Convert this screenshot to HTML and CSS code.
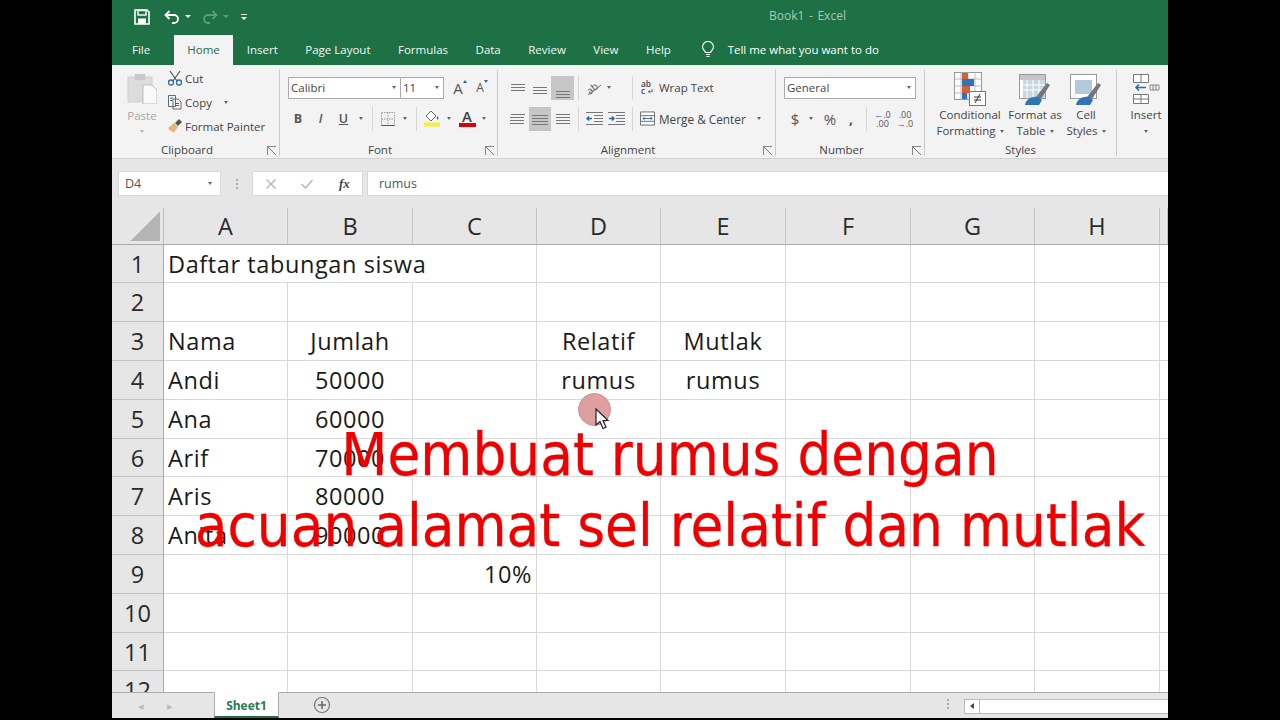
FILE: index.html
```html
<!DOCTYPE html>
<html lang="id">
<head>
<meta charset="utf-8">
<title>Book1 - Excel</title>
<link rel="stylesheet" href="styles.css">
</head>
<body>
<div class="app">
  <header class="titlebar">
    <svg class="qa save" width="16" height="16" viewBox="0 0 16 16"><path d="M1 1h12l2 2v12H1z" fill="none" stroke="#fff" stroke-width="1.6"/><rect x="4" y="1.5" width="8" height="4.5" fill="none" stroke="#fff" stroke-width="1.4"/><rect x="4" y="9.5" width="8" height="5.5" fill="#fff"/></svg>
    <svg class="qa undo" width="16" height="14" viewBox="0 0 16 14"><path d="M5.5 1 1.5 5l4 4M2 5h8a4 4 0 0 1 4 4v0a4 4 0 0 1-4 4H8" fill="none" stroke="#fff" stroke-width="1.8"/></svg>
    <span class="wcaret qa-c1"></span>
    <svg class="qa redo" width="16" height="14" viewBox="0 0 16 14"><path d="M10.5 1l4 4-4 4M14 5H6a4 4 0 0 0-4 4v0a4 4 0 0 0 4 4h2" fill="none" stroke="#5c9c78" stroke-width="1.8"/></svg>
    <span class="wcaret dim qa-c2"></span>
    <span class="custom"><i></i><b></b></span>
    <span class="doc">Book1 - Excel</span>
  </header>
  <nav class="tabs">
    <span class="tab file">File</span>
    <span class="tab home">Home</span>
    <span class="tab">Insert</span>
    <span class="tab">Page Layout</span>
    <span class="tab">Formulas</span>
    <span class="tab">Data</span>
    <span class="tab">Review</span>
    <span class="tab">View</span>
    <span class="tab">Help</span>
    <svg class="bulb" width="14" height="17" viewBox="0 0 14 17"><path d="M4.5 11.5C4 9.5 1.5 8.500 1.5 6a5.500 5.500 0 0 1 11 0c0 2.500-2.500 3.500-3 5.500zM5 13.500h4M5.500 15.500h3" fill="none" stroke="#fff" stroke-width="1.200"/></svg>
    <span class="tell">Tell me what you want to do</span>
  </nav>

  <section class="ribbon">
    <div class="group g-clip">
      <div class="body clip-body">
        <div class="paste">
          <svg width="30" height="32" viewBox="0 0 30 32"><rect x="1" y="5" width="24" height="25" fill="#dcdcdc" stroke="#cfcfcf"/><rect x="8" y="2" width="10" height="6" fill="#c8c8c8"/><path d="M16 13h9l5 5v14H16z" fill="#fafafa" stroke="#bdbdbd"/></svg>
          <span class="paste-t">Paste</span>
          <span class="caret faint"></span>
        </div>
        <div class="clip-list">
          <div class="cl"><svg width="16" height="16" viewBox="0 0 16 16"><path d="M3 1l7 10M13 1 6 11" stroke="#555" stroke-width="1.200" fill="none"/><circle cx="4" cy="12.500" r="2.500" fill="none" stroke="#2b6aa8" stroke-width="1.300"/><circle cx="12" cy="12.500" r="2.500" fill="none" stroke="#2b6aa8" stroke-width="1.300"/></svg><span>Cut</span></div>
          <div class="cl"><svg width="16" height="16" viewBox="0 0 16 16"><path d="M1.500 1.500h7v11h-7zM6 5h5l3 3v7H6z" fill="#f7f7f7" stroke="#666"/><path d="M3 4h3M3 6.500h2M8 9.500h4M8 11.500h4" stroke="#2b6aa8"/></svg><span>Copy</span><i class="caret cl-c"></i></div>
          <div class="cl"><svg width="16" height="16" viewBox="0 0 16 16"><path d="M1 10 7 5l4 4-4 5.500C5 14 2 12 1 10z" fill="#e3b777"/><path d="m8 5 4-4 3 3-4 4z" fill="#555"/></svg><span>Format Painter</span></div>
        </div>
      </div>
      <div class="label lbl-l">Clipboard<i class="launch"></i></div>
    </div>

    <div class="group g-font">
      <div class="body">
        <div class="row">
          <span class="combo c-name">Calibri<i class="caret"></i></span>
          <span class="combo c-size">11<i class="caret"></i></span>
          <span class="slot w28"><span class="bigA">A<i class="up"></i></span></span>
          <span class="slot w16"><span class="bigA sm">A<i class="dn"></i></span></span>
        </div>
        <div class="row pad7">
          <span class="slot w22 fmt b">B</span>
          <span class="slot w23 fmt it">I</span>
          <span class="slot w23 fmt u">U</span>
          <span class="slot w12"><i class="caret"></i></span>
          <span class="slot w10"><i class="sep"></i></span>
          <span class="slot w22"><svg width="14" height="14" viewBox="0 0 14 14"><path d="M.5.500h13v13H.500zM7 .5v13M.5 7h13" fill="none" stroke="#999" stroke-dasharray="1.500 1"/><path d="M.5 13.500h13" stroke="#555"/></svg></span>
          <span class="slot w12"><i class="caret"></i></span>
          <span class="slot w10"><i class="sep"></i></span>
          <span class="slot w22"><svg width="17" height="17" viewBox="0 0 17 17"><path d="M7 1 2 6l5 5 5-5z" fill="#fff" stroke="#666"/><path d="M13 6c1.500 1.500 2 3 .8 3.500-1 .2-1.200-1-.8-3.500z" fill="#2b6aa8"/><rect x="0" y="12.500" width="16" height="4" fill="#f7ef3a"/></svg></span>
          <span class="slot w12"><i class="caret"></i></span>
          <span class="slot w24 colorA">A<i></i></span>
          <span class="slot w10"><i class="caret"></i></span>
        </div>
      </div>
      <div class="label lbl-l">Font<i class="launch"></i></div>
    </div>

    <div class="group g-align">
      <div class="body">
        <div class="row pad9">
          <span class="slot w22 al"><i class="ln top"></i></span>
          <span class="slot w22 al"><i class="ln"></i></span>
          <span class="slot w23 al sel"><i class="ln bot"></i></span>
          <span class="slot w8"><i class="sep"></i></span>
          <span class="slot w24"><svg width="18" height="17" viewBox="0 0 18 17"><text class="orient" x="1" y="13" transform="rotate(-40 7 9)">ab</text><path d="M3 16 16 6" stroke="#666"/></svg></span>
          <span class="slot w6"><i class="caret"></i></span>
          <span class="slot w8 ml16"><i class="sep"></i></span>
          <span class="slot w14 ml5"><svg width="15" height="17" viewBox="0 0 15 17"><text class="wrap-ic" x="0" y="8">ab</text><text class="wrap-ic" x="0" y="16">c</text><path d="M12 10v3H8m1.500-1.500L8 13l1.500 1.500" fill="none" stroke="#2b6aa8"/></svg></span>
          <span class="rt">Wrap Text</span>
        </div>
        <div class="row pad9">
          <span class="slot w22 al"><i class="ln left"></i></span>
          <span class="slot w22 al sel"><i class="ln mid"></i></span>
          <span class="slot w23 al"><i class="ln right"></i></span>
          <span class="slot w8"><i class="sep"></i></span>
          <span class="slot w24"><svg width="17" height="13" viewBox="0 0 17 13"><path d="M8 3.500h9M8 6.500h9M8 9.500h9M0 12.500h17M0 .5h17" stroke="#777"/><path d="M6 6.500H1m2-2-2 2 2 2" fill="none" stroke="#2b6aa8" stroke-width="1.500"/></svg></span>
          <span class="slot w20"><svg width="17" height="13" viewBox="0 0 17 13"><path d="M8 3.500h9M8 6.500h9M8 9.500h9M0 12.500h17M0 .5h17" stroke="#777"/><path d="M1 6.500h5m-2-2 2 2-2 2" fill="none" stroke="#2b6aa8" stroke-width="1.500"/></svg></span>
          <span class="slot w8 ml2"><i class="sep"></i></span>
          <span class="slot w15 ml4"><svg width="16" height="15" viewBox="0 0 16 15"><path d="M.5.500h15v14H.500zM.5 4.500h15M.5 10.500h15" fill="#fff" stroke="#666"/><path d="M3 7.500h10M5 5.800 3 7.500l2 1.700M11 5.800l2 1.700-2 1.700" fill="none" stroke="#2b6aa8"/></svg></span>
          <span class="rt merge">Merge &amp; Center</span>
          <span class="slot w14 ml6"><i class="caret"></i></span>
        </div>
      </div>
      <div class="label lbl-l">Alignment<i class="launch"></i></div>
    </div>

    <div class="group g-num">
      <div class="body">
        <div class="row"><span class="combo c-gen">General<i class="caret"></i></span></div>
        <div class="row pad8">
          <span class="slot w22 numt">$</span>
          <span class="slot w10"><i class="caret"></i></span>
          <span class="slot w28 numt">%</span>
          <span class="slot w14 numt bold">,</span>
          <span class="slot w16"><i class="sep"></i></span>
          <span class="slot w17 dec"><em><b>←</b>.0</em><em>.00</em></span>
          <span class="slot w16 ml6 dec"><em>.00</em><em><b>→</b>.0</em></span>
        </div>
      </div>
      <div class="label lbl-l">Number<i class="launch"></i></div>
    </div>

    <div class="group g-styles">
      <div class="body style-body">
        <div class="big w66">
          <svg width="32" height="34" viewBox="0 0 32 34"><rect x=".5" y=".5" width="27" height="27" fill="#fff" stroke="#999"/><path d="M7 .5v27M14 .5v27M21 .5v27M.5 7h27M.5 14h27M.5 21h27" stroke="#bbb"/><rect x="8" y="1" width="6" height="6" fill="#d2603a"/><rect x="8" y="7" width="12" height="7" fill="#2f75b5"/><rect x="8" y="14" width="8" height="7" fill="#d2603a"/><rect x="8" y="21" width="5" height="6" fill="#2f75b5"/><rect x="15.500" y="19.500" width="16" height="14" fill="#fff" stroke="#777"/><path d="M20 28h7M20 25h7M26 22l-5 9" stroke="#333" fill="none"/></svg>
          <span>Conditional</span><span>Formatting<i class="caret tiny"></i></span>
        </div>
        <div class="big w64">
          <svg width="32" height="34" viewBox="0 0 32 34"><rect x=".5" y="2.500" width="26" height="24" fill="#fff" stroke="#999"/><rect x="1" y="3" width="25" height="5" fill="#c6c6c6"/><rect x="4" y="8" width="22" height="18" fill="#c7d7e0"/><path d="M8 8v18M14 8v18M20 8v18M1 13h25M1 18h25" stroke="#fff"/><path d="m17 25 11-14 3 2-9 14z" fill="#777"/><path d="M6 33c1-6 7-9 13-8l4 3-3 5z" fill="#2f75b5"/></svg>
          <span>Format as</span><span>Table<i class="caret tiny"></i></span>
        </div>
        <div class="big w38">
          <svg width="32" height="34" viewBox="0 0 32 34"><rect x=".5" y="2.500" width="26" height="24" fill="#fff" stroke="#999"/><rect x="5" y="8" width="17" height="14" fill="#b3cadb"/><path d="m17 25 11-14 3 2-9 14z" fill="#777"/><path d="M6 33c1-6 7-9 13-8l4 3-3 5z" fill="#2f75b5"/></svg>
          <span>Cell</span><span>Styles<i class="caret tiny"></i></span>
        </div>
      </div>
      <div class="label">Styles</div>
    </div>

    <div class="group g-cells">
      <div class="big w58">
        <svg width="28" height="32" viewBox="0 0 28 32"><path d="M1.500 1.500h15v8h-15zM9 1.500v8M1.500 21.500h15v9h-15zM9 21.500v9M1.500 26h15" fill="#fff" stroke="#777"/><path d="M18 12h9v5h-9zM21 12v5M24 12v5" fill="#eee" stroke="#888"/><path d="M14 14.500H4m3-3-3 3 3 3" fill="none" stroke="#2b6aa8" stroke-width="1.500"/></svg>
        <span class="ins">Insert</span><i class="caret"></i>
      </div>
    </div>
  </section>

  <section class="fbar">
    <div class="namebox">D4<i class="caret"></i></div>
    <div class="dots"><i></i><i></i><i></i></div>
    <div class="fxbox">
      <svg width="12" height="12" viewBox="0 0 12 12"><path d="m1.500 1.500 9 9m0-9-9 9" stroke="#b5b5b5" stroke-width="1.400"/></svg>
      <svg width="14" height="12" viewBox="0 0 14 12"><path d="m1.500 6 4 4 7-8" fill="none" stroke="#b5b5b5" stroke-width="1.400"/></svg>
      <span class="fx">fx</span>
    </div>
    <div class="finput">rumus</div>
  </section>

  <section class="sheet">
    <div class="corner"><i></i></div>
    <div class="ch">A</div><div class="ch">B</div><div class="ch">C</div><div class="ch">D</div><div class="ch">E</div><div class="ch">F</div><div class="ch">G</div><div class="ch">H</div><div class="ch"></div>

    <div class="rh">1</div><div class="c s3">Daftar tabungan siswa</div><div class="c"></div><div class="c"></div><div class="c"></div><div class="c"></div><div class="c"></div><div class="c"></div>
    <div class="rh">2</div><div class="c"></div><div class="c"></div><div class="c"></div><div class="c"></div><div class="c"></div><div class="c"></div><div class="c"></div><div class="c"></div><div class="c"></div>
    <div class="rh">3</div><div class="c">Nama</div><div class="c m">Jumlah</div><div class="c"></div><div class="c m">Relatif</div><div class="c m">Mutlak</div><div class="c"></div><div class="c"></div><div class="c"></div><div class="c"></div>
    <div class="rh">4</div><div class="c">Andi</div><div class="c m">50000</div><div class="c"></div><div class="c m">rumus</div><div class="c m">rumus</div><div class="c"></div><div class="c"></div><div class="c"></div><div class="c"></div>
    <div class="rh">5</div><div class="c">Ana</div><div class="c m">60000</div><div class="c"></div><div class="c"></div><div class="c"></div><div class="c"></div><div class="c"></div><div class="c"></div><div class="c"></div>
    <div class="rh">6</div><div class="c">Arif</div><div class="c m">70000</div><div class="c"></div><div class="c"></div><div class="c"></div><div class="c"></div><div class="c"></div><div class="c"></div><div class="c"></div>
    <div class="rh">7</div><div class="c">Aris</div><div class="c m">80000</div><div class="c"></div><div class="c"></div><div class="c"></div><div class="c"></div><div class="c"></div><div class="c"></div><div class="c"></div>
    <div class="rh">8</div><div class="c">Anita</div><div class="c m">90000</div><div class="c"></div><div class="c"></div><div class="c"></div><div class="c"></div><div class="c"></div><div class="c"></div><div class="c"></div>
    <div class="rh">9</div><div class="c"></div><div class="c"></div><div class="c r">10%</div><div class="c"></div><div class="c"></div><div class="c"></div><div class="c"></div><div class="c"></div><div class="c"></div>
    <div class="rh">10</div><div class="c"></div><div class="c"></div><div class="c"></div><div class="c"></div><div class="c"></div><div class="c"></div><div class="c"></div><div class="c"></div><div class="c"></div>
    <div class="rh">11</div><div class="c"></div><div class="c"></div><div class="c"></div><div class="c"></div><div class="c"></div><div class="c"></div><div class="c"></div><div class="c"></div><div class="c"></div>
    <div class="rh">12</div><div class="c"></div><div class="c"></div><div class="c"></div><div class="c"></div><div class="c"></div><div class="c"></div><div class="c"></div><div class="c"></div><div class="c"></div>
  </section>

  <footer class="tabbar">
    <span class="nav">&#9666;</span><span class="nav">&#9656;</span>
    <span class="sheettab">Sheet1</span>
    <svg class="plus" width="18" height="18" viewBox="0 0 18 18"><circle cx="9" cy="9" r="7.500" fill="none" stroke="#777" stroke-width="1.200"/><path d="M9 5v8M5 9h8" stroke="#666" stroke-width="1.500"/></svg>
    <span class="hdots"><i></i><i></i><i></i></span>
    <span class="hscroll"><span class="harrow"></span></span>
  </footer>

  <div class="pointer">
    <svg width="16" height="22" viewBox="0 0 16 22"><path d="M1 1v16l4-3.500 3 7 3-1.300-3-6.700h5z" fill="#fff" stroke="#222" stroke-width="1.200"/></svg>
  </div>
</div>
<div class="caption"><p>Membuat rumus dengan</p><p>acuan alamat sel relatif dan mutlak</p></div>
</body>
</html>
```
FILE: styles.css
```css
* { box-sizing: border-box; }
html, body { margin: 0; height: 720px; overflow: hidden; background: #000; }
body { position: relative; font-family: "Open Sans", "Noto Sans", sans-serif; }
i, em { font-style: normal; }
.app { position: relative; width: 1056px; height: 718px; margin-left: 112px; background: #e6e6e6; overflow: hidden; display: flex; flex-direction: column; }

.titlebar { height: 35px; background: #1e7145; display: flex; align-items: center; padding: 0 0 2px 22px; position: relative; flex: none; }
.qa-c1 { margin-left: 5px; }
.undo { margin-left: 14px; }
.redo { margin-left: 11px; }
.qa-c2 { margin-left: 5px; }
.wcaret { width: 0; height: 0; border: 3px solid transparent; border-top: 3px solid #fff; border-bottom: 0; }
.wcaret.dim { border-top-color: #5c9c78; }
.custom { margin-left: 12px; display: flex; flex-direction: column; align-items: center; gap: 2px; }
.custom i { width: 6px; height: 1px; background: #fff; }
.custom b { width: 0; height: 0; border: 3px solid transparent; border-top-color: #fff; border-bottom: 0; }
.doc { position: absolute; left: 657px; top: 7px; font-size: 12px; color: #a7c9b6; line-height: 17px; word-spacing: 1.500px; }

.tabs { height: 30px; background: #1e7145; display: flex; align-items: stretch; flex: none; color: #fff; font-size: 11.500px; }
.tab { padding: 0 13.750px; line-height: 29px; white-space: nowrap; color: #f2f7f4; }
.tab.file { margin-left: 6px; padding: 0 0 0 14px; width: 47px; }
.tab.home { margin-left: 9px; width: 59px; padding: 0; text-align: center; background: #f3f3f3; color: #1e7145; }
.bulb { margin: 6px 0 0 16px; }
.tell { margin-left: 13px; line-height: 29px; white-space: nowrap; }

.ribbon { height: 94px; background: #f3f3f3; border-bottom: 1px solid #d2d2d2; padding-top: 5px; display: flex; flex: none; font-size: 11.500px; color: #444; overflow: hidden; }
.group { display: flex; flex-direction: column; border-right: 1px solid #c9c9c9; flex: none; height: 86px; }
.g-clip { width: 168px; }
.g-font { width: 218px; }
.g-align { width: 278px; }
.g-num { width: 149px; }
.g-styles { width: 192px; }
.g-cells { width: 58px; border-right: 0; }
.body { height: 72px; padding-top: 2px; }
.label { height: 14px; line-height: 16px; text-align: center; font-size: 11.500px; position: relative; color: #444; }
.lbl-l { padding-right: 17px; }
.launch { position: absolute; right: 3px; top: 4px; width: 9px; height: 9px; border-left: 1px solid #888; border-top: 1px solid #888; background: linear-gradient(45deg, transparent 45%, #777 45%, #777 55%, transparent 55%); }
.row { height: 31px; display: flex; align-items: center; }
.pad7 { padding-left: 7px; }
.pad8 { padding-left: 8px; }
.pad9 { padding-left: 9px; }
.slot { display: flex; align-items: center; justify-content: center; flex: none; height: 24px; }
.w6 { width: 6px; } .w8 { width: 8px; } .w10 { width: 10px; } .w12 { width: 12px; } .w14 { width: 14px; } .w15 { width: 15px; } .w16 { width: 16px; } .w17 { width: 17px; } .w20 { width: 20px; } .w22 { width: 22px; } .w23 { width: 23px; } .w24 { width: 24px; } .w28 { width: 28px; }
.ml2 { margin-left: 2px; } .ml4 { margin-left: 4px; } .ml5 { margin-left: 5px; } .ml6 { margin-left: 6px; } .ml16 { margin-left: 16px; }
.caret { display: inline-block; width: 0; height: 0; border: 2.500px solid transparent; border-top: 3px solid #666; border-bottom: 0; flex: none; }
.caret.faint { border-top-color: #b5b5b5; }
.caret.tiny { margin-left: 4px; vertical-align: middle; }
.sep { display: block; width: 1px; height: 24px; background: #d6d6d6; }

.clip-body { display: flex; padding-top: 0; }
.paste { width: 36px; margin-left: 12px; display: flex; flex-direction: column; align-items: center; padding-top: 2px; color: #a9a9a9; }
.paste-t { line-height: 16px; margin-top: 4px; font-size: 11.500px; }
.paste .caret { margin-top: 6px; }
.clip-list { margin: -4px 0 0 7px; display: flex; flex-direction: column; }
.cl { height: 24px; display: flex; align-items: center; gap: 2px; white-space: nowrap; }
.cl-c { margin-left: 10px; }

.combo { height: 22px; background: #fff; border: 1px solid #ababab; display: flex; align-items: center; justify-content: space-between; padding: 0 4px 0 2px; font-size: 11.500px; color: #444; flex: none; }
.c-name { width: 113px; margin-left: 8px; }
.c-size { width: 44px; margin-left: -1px; }
.c-gen { width: 132px; margin-left: 8px; }
.bigA { font-size: 15px; color: #555; position: relative; line-height: 16px; }
.bigA.sm { font-size: 12px; }
.bigA i { position: absolute; right: -4px; top: 0; width: 0; height: 0; border: 2.500px solid transparent; }
.bigA .up { border-bottom: 3px solid #2b6aa8; border-top: 0; }
.bigA .dn { border-top: 3px solid #2b6aa8; border-bottom: 0; }
.fmt { font-size: 12.500px; color: #555; }
.fmt.b { font-weight: 700; }
.fmt.it { font-style: italic; font-weight: 600; }
.fmt.u { text-decoration: underline; font-weight: 600; }
.colorA { flex-direction: column; font-size: 15px; line-height: 13px; color: #444; font-weight: 600; }
.colorA i { width: 17px; height: 4px; background: #d9000d; }

.al { height: 24px; }
.al.sel { background: #c6c6c6; }
.ln { display: block; width: 14px; height: 1px; background: #777; box-shadow: 0 3px 0 #777, 0 6px 0 #777; }
.ln.top { margin-bottom: 7px; }
.ln.bot { margin-top: 7px; }
.ln.mid { width: 16px; margin-bottom: 6px; box-shadow: 0 3px 0 #777, 0 6px 0 #777, 0 9px 0 #777; }
.ln.left { width: 14px; margin-bottom: 9px; box-shadow: -1px 3px 0 #777, -1px 6px 0 #777, -1px 9px 0 #777; }
.ln.right { margin-bottom: 9px; box-shadow: 0 3px 0 #777, 0 6px 0 #777, 0 9px 0 #777; }
.orient { font-size: 10px; fill: #555; }
.wrap-ic { font-size: 9px; fill: #444; font-weight: 600; }
.rt { margin-left: 4px; white-space: nowrap; }
.rt.merge { font-size: 11.800px; }
.numt { font-size: 15px; color: #555; }
.numt.bold { font-weight: 700; font-size: 14px; }
.dec { flex-direction: column; font-size: 9px; line-height: 9px; color: #555; white-space: nowrap; }
.dec b { color: #2b6aa8; font-weight: 400; }

.style-body { display: flex; padding: 2px 0 0 12px; }
.big { display: flex; flex-direction: column; align-items: center; flex: none; line-height: 16px; white-space: nowrap; }
.big svg { margin-bottom: 1px; flex: none; }
.w66 { width: 66px; } .w64 { width: 64px; } .w38 { width: 38px; } .w58 { width: 58px; }
.g-cells .big { padding-top: 3px; }
.g-cells .big .ins { margin-top: 1px; }
.g-cells .caret { margin-top: 7px; }

.fbar { height: 49px; flex: none; background: #e6e6e6; display: flex; align-items: flex-start; padding: 12px 0 0 6px; font-size: 12.500px; color: #555; }
.namebox { width: 103px; height: 25px; background: #fff; border: 1px solid #d8d8d8; display: flex; align-items: center; justify-content: space-between; padding: 0 8px 0 6px; }
.dots { width: 31px; height: 25px; display: flex; flex-direction: column; align-items: center; justify-content: center; gap: 2px; }
.dots i { width: 2px; height: 2px; background: #aaa; }
.fxbox { width: 111px; height: 25px; background: #fff; border: 1px solid #d8d8d8; display: flex; align-items: center; gap: 23px; padding-left: 12px; }
.fx { font-family: "Liberation Serif", serif; font-style: italic; font-weight: 700; font-size: 13px; color: #444; margin-left: 2px; }
.finput { flex: 1; height: 25px; margin-left: 4px; background: #fff; border: 1px solid #d8d8d8; border-right: 0; line-height: 23px; padding-left: 11px; }

.sheet { height: 484px; flex: none; display: grid; grid-template-columns: 52px 124px 125px 124px 124px 125px 125px 124px 125px 8px; grid-template-rows: 36.600px repeat(12, 38.800px); background: #fff; overflow: hidden; font-size: 23.500px; color: #1a1a1a; }
.corner { background: #e6e6e6; border-right: 1px solid #bbb; border-bottom: 1px solid #aaa; display: flex; align-items: flex-end; justify-content: flex-end; padding: 0 3px 3px 0; }
.corner i { width: 29px; height: 29px; background: linear-gradient(135deg, transparent 50%, #b4b4b4 50%); }
.ch { background: #e6e6e6; border-right: 1px solid #c4c4c4; border-bottom: 1px solid #aaa; text-align: center; line-height: 37px; color: #2a2a2a; }
.rh { background: #e6e6e6; border-right: 1px solid #aaa; border-bottom: 1px solid #c4c4c4; text-align: center; line-height: 38px; color: #2a2a2a; }
.c { border-right: 1px solid #d9d9d9; border-bottom: 1px solid #d9d9d9; line-height: 39px; padding: 0 4px; white-space: nowrap; overflow: visible; letter-spacing: .6px; }
.s3 { grid-column: span 3; }
.m { text-align: center; }
.r { text-align: right; }

.tabbar { flex: 1; background: #e6e6e6; border-top: 1px solid #ababab; display: flex; align-items: flex-start; position: relative; }
.nav { width: 29px; text-align: center; font-size: 11px; color: #bbb; line-height: 25px; }
.nav:first-child { margin-left: 14px; }
.sheettab { margin: -1px 0 0 30px; width: 65px; height: 26px; background: #fff; border: 1px solid #ababab; border-top-color: #fff; border-bottom: 2px solid #1e7145; color: #2a7a50; font-weight: 700; font-size: 12px; text-align: center; line-height: 26px; }
.plus { margin: 3px 0 0 34px; }
.hdots { margin: 6px 0 0 616px; display: flex; flex-direction: column; gap: 2px; }
.hdots i { width: 2px; height: 2px; background: #aaa; }
.hscroll { margin: 6px 0 0 15px; height: 15px; flex: 1; background: #fff; border: 1px solid #bbb; border-right: 0; }
.harrow { display: block; width: 15px; height: 13px; border-right: 1px solid #bbb; position: relative; }
.harrow::before { content: ""; position: absolute; left: 5px; top: 3px; border: 3.500px solid transparent; border-right: 4px solid #444; border-left: 0; }

.pointer { position: absolute; left: 466px; top: 393px; width: 33px; height: 33px; border-radius: 50%; background: #dd9f9f; border: 1px solid #d08d8d; }
.pointer svg { position: absolute; left: 16px; top: 14px; }

.caption { position: absolute; left: 142px; top: 419px; width: 1056px; text-align: center; font-family: "DejaVu Sans Condensed", "DejaVu Sans", sans-serif; font-stretch: condensed; font-size: 59.400px; line-height: 71px; color: #ee0000; white-space: nowrap; -webkit-text-stroke: .3px #ee0000; }
.caption p { margin: 0; }
```
